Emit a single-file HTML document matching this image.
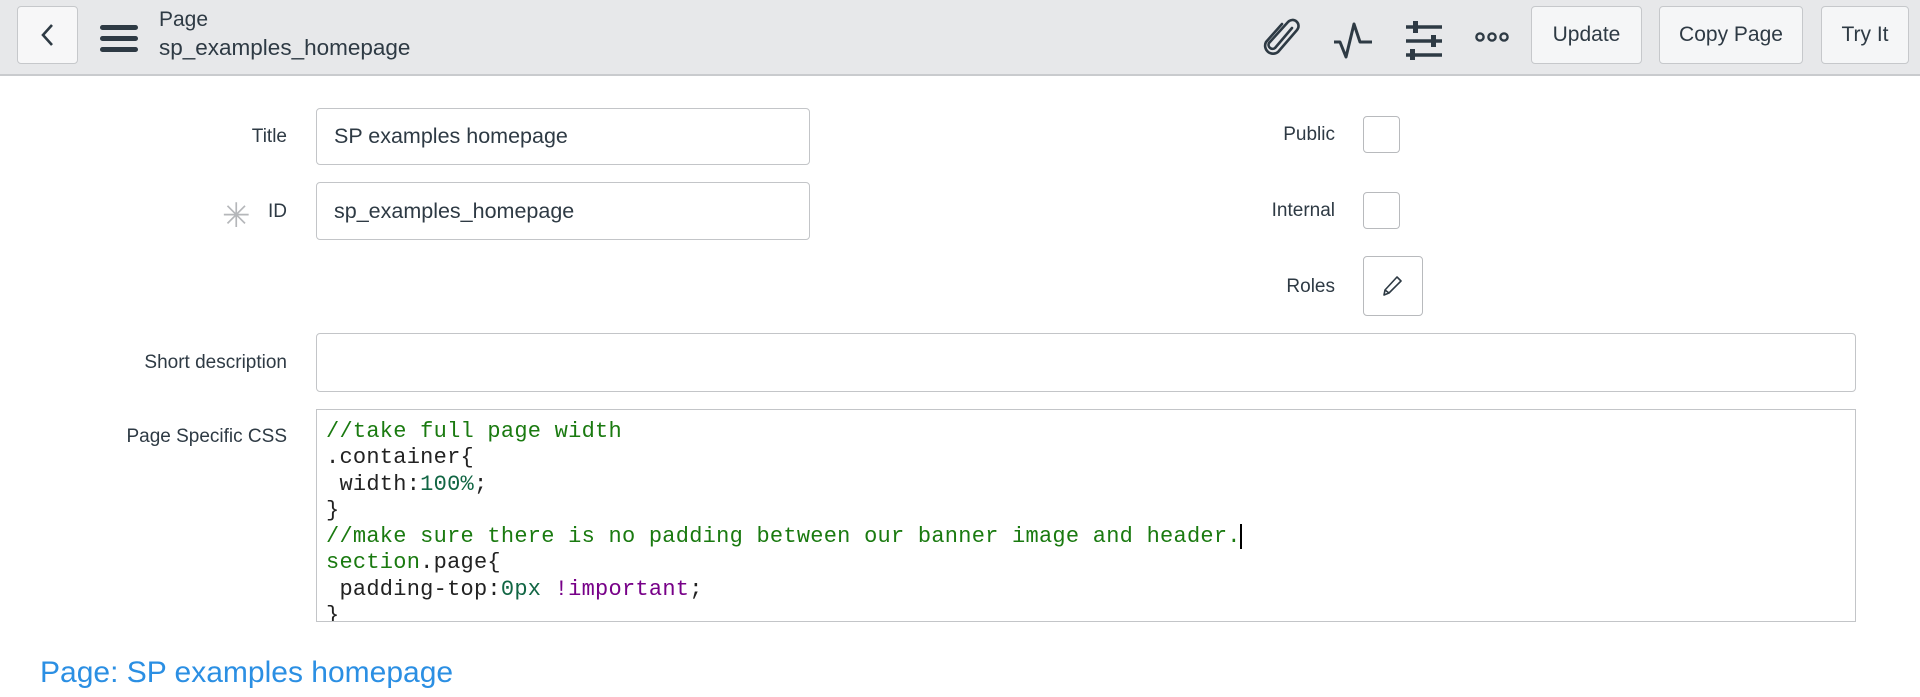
<!DOCTYPE html>
<html><head><meta charset="utf-8"><style>
*{box-sizing:border-box;margin:0;padding:0}
body{width:1920px;height:697px;background:#fff;font-family:"Liberation Sans",sans-serif;color:#333;position:relative;overflow:hidden}
.hdr{position:absolute;left:0;top:0;width:1920px;height:76px;background:#e7e8ea;border-bottom:2px solid #c9cbce}
.btn{position:absolute;top:6px;height:58px;border:1px solid #c6c8cb;border-radius:4px;background:#f5f6f7;font-size:21px;color:#2e3a44;display:flex;align-items:center;justify-content:center}
.lbl{position:absolute;font-size:19px;color:#2e3a44;text-align:right}
.inp{position:absolute;border:1px solid #c3c5c8;border-radius:4px;background:#fff;font-size:21.5px;color:#2e3a44;padding-left:17px;display:flex;align-items:center}
.cb{position:absolute;border:1px solid #b8babd;border-radius:4px;background:#fff}
.code{position:absolute;left:316px;top:409px;width:1540px;height:213px;border:1px solid #c3c5c8;overflow:hidden;font-family:"Liberation Mono",monospace;font-size:22px;letter-spacing:0.25px;line-height:26.3px;padding:9px 0 0 9px;color:#222;white-space:pre}
.cm{color:#1a7a10}.nm{color:#116644}.im{color:#770088}.tg{color:#1a7a10}
</style></head><body>
<div class="hdr">
  <div class="btn" style="left:17px;width:61px;background:#f7f7f8"><svg width="20" height="26" viewBox="0 0 20 26"><path d="M14 3 L5 13 L14 23" fill="none" stroke="#2e3a44" stroke-width="2.6"/></svg></div>
  <svg style="position:absolute;left:100px;top:25px" width="38" height="28" viewBox="0 0 38 28"><rect x="0" y="0" width="38" height="5" rx="2.5" fill="#2e3a44"/><rect x="0" y="11" width="38" height="5" rx="2.5" fill="#2e3a44"/><rect x="0" y="22" width="38" height="5" rx="2.5" fill="#2e3a44"/></svg>
  <div style="position:absolute;left:159px;top:8px;font-size:21px;color:#2e3a44">Page</div>
  <div style="position:absolute;left:159px;top:35px;font-size:22.5px;color:#2e3a44">sp_examples_homepage</div>
  <svg style="position:absolute;left:1262px;top:18px" width="40" height="42" viewBox="0 0 40 42"><path d="M30 10 L13 30 a4 4 0 0 1 -6 -5 L26 4 a6 6 0 0 1 9 8 L16 34 a8 8 0 0 1 -12 -10 L20 6" fill="none" stroke="#2e3a44" stroke-width="2.6" stroke-linecap="round"/></svg>
  <svg style="position:absolute;left:1332px;top:20px" width="44" height="40" viewBox="0 0 44 40"><path d="M2 22 L8 22 L14 37 L22 4 L28 22 L40 22" fill="none" stroke="#2e3a44" stroke-width="3" stroke-linejoin="round"/></svg>
  <svg style="position:absolute;left:1404px;top:20px" width="40" height="40" viewBox="0 0 40 40"><g stroke="#2e3a44" stroke-width="3.5"><line x1="2" y1="7" x2="38" y2="7"/><line x1="2" y1="21" x2="38" y2="21"/><line x1="2" y1="35" x2="38" y2="35"/></g><g fill="#2e3a44"><rect x="9" y="1" width="5" height="12"/><rect x="27" y="15" width="5" height="12"/><rect x="6" y="29" width="5" height="12"/></g></svg>
  <svg style="position:absolute;left:1474px;top:31px" width="36" height="12" viewBox="0 0 36 12"><g fill="none" stroke="#2e3a44" stroke-width="2.4"><circle cx="6" cy="6" r="3.6"/><circle cx="18" cy="6" r="3.6"/><circle cx="30" cy="6" r="3.6"/></g></svg>
  <div class="btn" style="left:1531px;width:111px">Update</div>
  <div class="btn" style="left:1659px;width:144px">Copy Page</div>
  <div class="btn" style="left:1821px;width:88px">Try It</div>
</div>

<div class="lbl" style="right:1633px;top:126px">Title</div>
<div class="inp" style="left:316px;top:108px;width:494px;height:57px">SP examples homepage</div>
<div style="position:absolute;left:222px;top:196px;font-size:34px;color:#b5b7ba;font-weight:300">✳</div>
<div class="lbl" style="right:1633px;top:201px">ID</div>
<div class="inp" style="left:316px;top:182px;width:494px;height:58px">sp_examples_homepage</div>

<div class="lbl" style="right:585px;top:124px">Public</div>
<div class="cb" style="left:1363px;top:116px;width:37px;height:37px"></div>
<div class="lbl" style="right:585px;top:200px">Internal</div>
<div class="cb" style="left:1363px;top:192px;width:37px;height:37px"></div>
<div class="lbl" style="right:585px;top:276px">Roles</div>
<div class="cb" style="left:1363px;top:256px;width:60px;height:60px"><svg style="position:absolute;left:17px;top:17px" width="24" height="24" viewBox="0 0 24 24"><path d="M3 21 L4 16 L16 3 L20 7 L8 19 Z M4 16 L8 19" fill="none" stroke="#2e3a44" stroke-width="1.6" stroke-linejoin="round"/></svg></div>

<div class="lbl" style="right:1633px;top:352px">Short description</div>
<div class="inp" style="left:316px;top:333px;width:1540px;height:59px"></div>
<div class="lbl" style="right:1633px;top:426px">Page Specific CSS</div>
<div class="code"><span class="cm">//take full page width</span>
.container{
 width:<span class="nm">100%</span>;
}
<span class="cm">//make sure there is no padding between our banner image and header.</span><span style="border-left:2px solid #000;margin-left:-1px"></span>
<span class="tg">section</span>.page{
 padding-top:<span class="nm">0px</span> <span class="im">!important</span>;
}</div>

<div style="position:absolute;left:40px;top:656px;font-size:30px;color:#2b8fe3">Page: SP examples homepage</div>
</body></html>
